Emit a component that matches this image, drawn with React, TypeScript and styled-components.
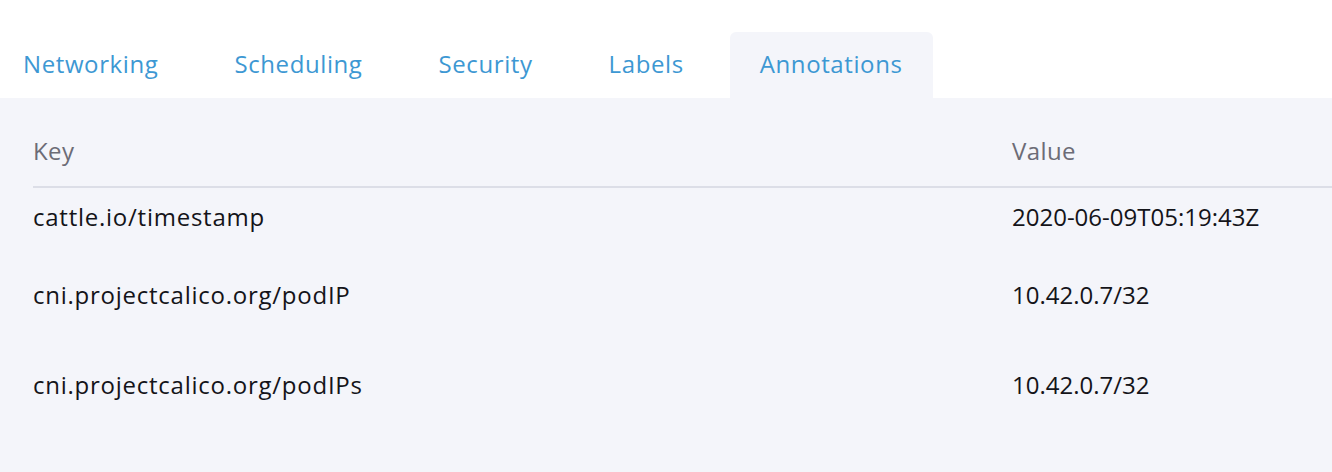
import React from "react";
import styled, { createGlobalStyle } from "styled-components";

const Global = createGlobalStyle`
  html, body { margin: 0; padding: 0; background: #ffffff; }
  body { font-family: "Open Sans", "Noto Sans", sans-serif; overflow: hidden; }
  * { box-sizing: border-box; }
`;

const Page = styled.div`
  width: 1332px;
  height: 472px;
  display: flex;
  flex-direction: column;
  background: #ffffff;
  overflow: hidden;
`;

const TabList = styled.div`
  display: flex;
  align-items: flex-end;
  gap: 15px;
  height: 98px;
  margin-left: -7px;
`;

const Tab = styled.div<{ $active?: boolean }>`
  height: 66px;
  padding: 0 31px 4px 30px;
  display: flex;
  align-items: center;
  font-size: 24px;
  letter-spacing: 0.6px;
  color: #3d98d3;
  border-radius: 6px 6px 0 0;
  background: ${(p) => (p.$active ? "#f4f5fa" : "transparent")};
  white-space: nowrap;
`;

const Panel = styled.div`
  flex: 1;
  background: #f4f5fa;
  padding-left: 33px;
`;

const Table = styled.div`
  display: grid;
  grid-template-columns: 979px 1fr;
`;

const HeadCell = styled.div`
  height: 90px;
  padding-top: 16px;
  display: flex;
  align-items: center;
  font-size: 24px;
  letter-spacing: 0.4px;
  color: #6c6c76;
  border-bottom: 2px solid #dcdee7;
  white-space: nowrap;
`;

const Cell = styled.div<{ $h: number; $num?: boolean }>`
  height: ${(p) => p.$h}px;
  display: flex;
  align-items: center;
  font-size: 24px;
  letter-spacing: ${(p) => (p.$num ? "0" : "0.75px")};
  color: #141419;
  white-space: nowrap;
`;

const tabs = ["Networking", "Scheduling", "Security", "Labels", "Annotations"];
const rows: { k: string; v: string; h: number }[] = [
  { k: "cattle.io/timestamp", v: "2020-06-09T05:19:43Z", h: 56 },
  { k: "cni.projectcalico.org/podIP", v: "10.42.0.7/32", h: 100 },
  { k: "cni.projectcalico.org/podIPs", v: "10.42.0.7/32", h: 80 },
];

export default function App() {
  return (
    <Page>
      <Global />
      <TabList>
        {tabs.map((t) => (
          <Tab key={t} $active={t === "Annotations"}>
            {t}
          </Tab>
        ))}
      </TabList>
      <Panel>
        <Table>
          <HeadCell>Key</HeadCell>
          <HeadCell>Value</HeadCell>
          {rows.map((r) => (
            <React.Fragment key={r.k}>
              <Cell $h={r.h}>{r.k}</Cell>
              <Cell $h={r.h} $num>
                {r.v}
              </Cell>
            </React.Fragment>
          ))}
        </Table>
      </Panel>
    </Page>
  );
}
